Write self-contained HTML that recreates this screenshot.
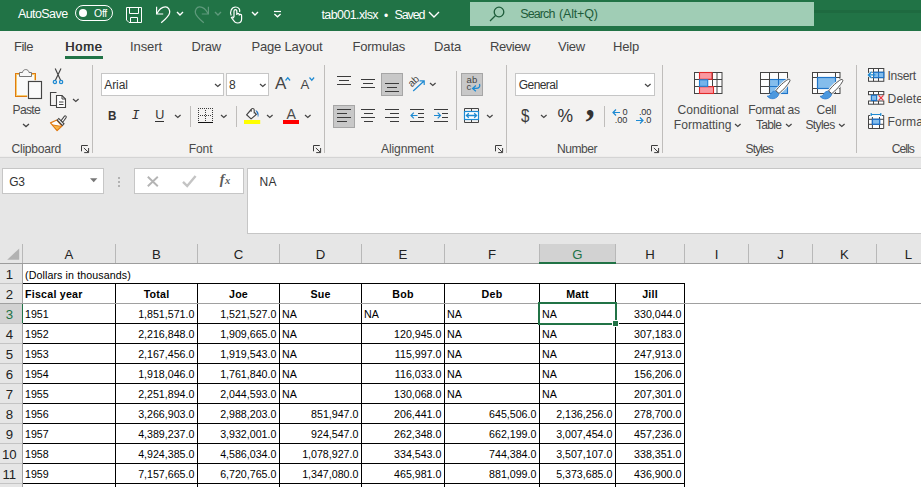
<!DOCTYPE html>
<html><head><meta charset="utf-8"><title>tab001.xlsx - Excel</title>
<style>
html,body{margin:0;padding:0;}
body{width:921px;height:487px;overflow:hidden;position:relative;background:#fff;font-family:"Liberation Sans",sans-serif;}
.t{position:absolute;white-space:pre;}
.r{position:absolute;}
svg{overflow:visible;}
</style></head><body>
<div class="r" style="left:0px;top:0px;width:921px;height:31px;background:#217346;"></div>
<div class="r" style="left:814px;top:10px;width:107px;height:3px;background:#1e6a40;"></div>
<div class="r" style="left:0px;top:31px;width:921px;height:126px;background:#f3f2f1;"></div>
<div class="r" style="left:0px;top:157px;width:921px;height:1px;background:#f8f8f8;"></div>
<div class="r" style="left:0px;top:158px;width:921px;height:106px;background:#e6e6e6;"></div>
<div class="t" style="left:18.00px;top:8.00px;font-size:12.5px;line-height:12.5px;color:#fff;letter-spacing:-0.588px;">AutoSave</div>
<div class="r" style="left:75px;top:5px;width:36px;height:14px;border:1px solid #fff;border-radius:8px;"></div>
<div class="r" style="left:79px;top:9px;width:8px;height:8px;border-radius:4px;background:#fff;"></div>
<div class="t" style="left:94.00px;top:8.00px;font-size:10.5px;line-height:10.5px;color:#fff;letter-spacing:-0.270px;">Off</div>
<svg class="r" style="left:126px;top:7px" width="16" height="16" viewBox="0 0 16 16"><path d="M0.5 0.5 H15.5 V15.5 H3 L0.5 13 Z M3.5 0.5 V6.5 H12.5 V0.5 M4.5 15.5 V10.5 H11.5 V15.5" fill="none" stroke="#fff" stroke-width="1"/></svg>
<svg class="r" style="left:156px;top:6px" width="15" height="18" viewBox="0 0 15 18"><path d="M0.6 0.8 V8 H7.2" fill="none" stroke="#fff" stroke-width="1.2"/><path d="M0.8 7.8 C3 3.5 6.5 0.8 9.5 0.9 C12.5 1 14 4 13.6 6.8 C13.2 9.5 9 13.5 5.2 16.8" fill="none" stroke="#fff" stroke-width="1.2"/></svg>
<svg class="r" style="left:175.6px;top:11.1px" width="8" height="5" viewBox="0 0 8 5"><path d="M1 1 L4.0 4 L7 1" fill="none" stroke="#fff" stroke-width="1.4"/></svg>
<svg class="r" style="left:194px;top:6px" width="15" height="18" viewBox="0 0 15 18"><path d="M14.4 0.8 V8 H7.8" fill="none" stroke="#5f9a7c" stroke-width="1.2"/><path d="M14.2 7.8 C12 3.5 8.5 0.8 5.5 0.9 C2.5 1 1 4 1.4 6.8 C1.8 9.5 6 13.5 9.8 16.8" fill="none" stroke="#5f9a7c" stroke-width="1.2"/></svg>
<svg class="r" style="left:214.4px;top:11.1px" width="8" height="5" viewBox="0 0 8 5"><path d="M1 1 L4.0 4 L7 1" fill="none" stroke="#5f9a7c" stroke-width="1.4"/></svg>
<svg class="r" style="left:230px;top:6px" width="13" height="18" viewBox="0 0 13 18">
<path d="M1.2 9.5 C-0.5 6 1.5 1 5.5 1 C8.8 1 10.3 3.5 9.6 6" fill="none" stroke="#fff" stroke-width="1.2"/>
<path d="M4 11 V5 a1.4 1.4 0 0 1 2.8 0 V9 M6.8 8.6 a1.2 1.2 0 0 1 2.4 0 V9.6 M9.2 9.4 a1.2 1.2 0 0 1 2.4 0.2 V13 c0 2.6 -1.6 4 -4 4 c-2.2 0 -3.2 -1 -4.6 -3.3 L1.4 11.6 c0.8 -0.9 1.8 -0.5 2.6 0.6" fill="none" stroke="#fff" stroke-width="1.2"/>
</svg>
<svg class="r" style="left:250.6px;top:11.1px" width="8" height="5" viewBox="0 0 8 5"><path d="M1 1 L4.0 4 L7 1" fill="none" stroke="#fff" stroke-width="1.4"/></svg>
<svg class="r" style="left:273px;top:10px" width="9" height="8" viewBox="0 0 9 8"><path d="M1 1.5 H8" stroke="#fff" stroke-width="1.2"/><path d="M1.4 4 L4.5 6.8 L7.6 4" fill="none" stroke="#fff" stroke-width="1.3"/></svg>
<div class="t" style="left:321.50px;top:9.00px;font-size:12.5px;line-height:12.5px;color:#fff;letter-spacing:-0.612px;">tab001.xlsx</div>
<div class="t" style="left:384.00px;top:10.00px;font-size:12px;line-height:12px;color:#fff;letter-spacing:0.000px;">•</div>
<div class="t" style="left:394.50px;top:9.00px;font-size:12.5px;line-height:12.5px;color:#fff;letter-spacing:-1.108px;">Saved</div>
<svg class="r" style="left:428.3px;top:10.7px" width="12" height="7" viewBox="0 0 12 7"><path d="M1 1 L6.0 6 L11 1" fill="none" stroke="#fff" stroke-width="1.4"/></svg>
<div class="r" style="left:470px;top:2px;width:344px;height:24px;background:#a0cdb5;"></div>
<svg class="r" style="left:489px;top:6px" width="16" height="16" viewBox="0 0 16 16"><circle cx="10" cy="6" r="4.8" fill="none" stroke="#1e5c3a" stroke-width="1.3"/><path d="M6.5 9.5 L1 15" stroke="#1e5c3a" stroke-width="1.3"/></svg>
<div class="t" style="left:520.20px;top:8.00px;font-size:12.5px;line-height:12.5px;color:#1e5c3a;letter-spacing:-0.884px;">Search</div>
<div class="t" style="left:559.00px;top:8.00px;font-size:12.5px;line-height:12.5px;color:#1e5c3a;letter-spacing:-0.162px;">(Alt+Q)</div>
<div class="t" style="left:14.00px;top:40.00px;font-size:13px;line-height:13px;color:#444;letter-spacing:-0.487px;">File</div>
<div class="t" style="left:65.00px;top:40.00px;font-size:13px;line-height:13px;color:#333;letter-spacing:0.706px;text-shadow:0.4px 0 0 #333;">Home</div>
<div class="t" style="left:130.00px;top:40.00px;font-size:13px;line-height:13px;color:#444;letter-spacing:-0.085px;">Insert</div>
<div class="t" style="left:191.50px;top:40.00px;font-size:13px;line-height:13px;color:#444;letter-spacing:-0.209px;">Draw</div>
<div class="t" style="left:251.50px;top:40.00px;font-size:13px;line-height:13px;color:#444;letter-spacing:-0.182px;">Page Layout</div>
<div class="t" style="left:352.50px;top:40.00px;font-size:13px;line-height:13px;color:#444;letter-spacing:-0.209px;">Formulas</div>
<div class="t" style="left:434.00px;top:40.00px;font-size:13px;line-height:13px;color:#444;letter-spacing:-0.115px;">Data</div>
<div class="t" style="left:490.00px;top:40.00px;font-size:13px;line-height:13px;color:#444;letter-spacing:-0.437px;">Review</div>
<div class="t" style="left:558.00px;top:40.00px;font-size:13px;line-height:13px;color:#444;letter-spacing:-0.235px;">View</div>
<div class="t" style="left:613.00px;top:40.00px;font-size:13px;line-height:13px;color:#444;letter-spacing:-0.184px;">Help</div>
<div class="r" style="left:65px;top:56px;width:38px;height:3px;background:#217346;"></div>
<svg class="r" style="left:14px;top:68px" width="29" height="32" viewBox="0 0 29 32">
<rect x="1.5" y="5.5" width="20" height="23" fill="#fafafa" stroke="#e07c10" stroke-width="1"/>
<rect x="2.5" y="6.5" width="18" height="21" fill="none" stroke="#f6cc70" stroke-width="1"/>
<path d="M5.5 8.5 V4.5 H8.5 C8.9 0.6 14.6 0.6 15 4.5 H17.5 V8.5 Z" fill="#f8f8f8" stroke="#777" stroke-width="1"/>
<rect x="13.2" y="12.2" width="15.6" height="19" fill="#f3f2f1"/>
<rect x="14.5" y="13.5" width="13" height="17" fill="#fafafa" stroke="#444" stroke-width="1.15"/>
</svg>
<div class="t" style="left:12.50px;top:104.00px;font-size:12.1px;line-height:12.1px;color:#4a4a4a;letter-spacing:-0.688px;">Paste</div>
<svg class="r" style="left:21.5px;top:123.2px" width="8" height="4.6" viewBox="0 0 8 4.6"><path d="M1 1 L4.0 3.6 L7 1" fill="none" stroke="#444" stroke-width="1.25"/></svg>
<svg class="r" style="left:52px;top:68px" width="12" height="17" viewBox="0 0 12 17">
<path d="M3.2 0.5 L8.6 12.2 M9 0.5 L3.4 12.2" stroke="#444" stroke-width="1.15" fill="none"/>
<circle cx="2.9" cy="14" r="1.6" fill="none" stroke="#1e8ad2" stroke-width="1.3"/>
<circle cx="9.1" cy="14" r="1.6" fill="none" stroke="#1e8ad2" stroke-width="1.3"/>
</svg>
<svg class="r" style="left:49px;top:92px" width="18" height="16" viewBox="0 0 18 16">
<path d="M7 13.5 H1.5 V0.5 H7.5" fill="none" stroke="#444" stroke-width="1.1"/>
<path d="M7.5 3.5 H13 L16.5 7 V15.5 H7.5 Z" fill="#fff" stroke="#444" stroke-width="1.1"/>
<path d="M13 3.5 V7 H16.5" fill="none" stroke="#444" stroke-width="1"/>
<path d="M10 10 H14.5 M10 12.5 H14.5" stroke="#444" stroke-width="1"/>
</svg>
<svg class="r" style="left:71.7px;top:98.3px" width="7.6" height="4.4" viewBox="0 0 7.6 4.4"><path d="M1 1 L3.8 3.4 L6.6 1" fill="none" stroke="#444" stroke-width="1.25"/></svg>
<svg class="r" style="left:46px;top:112px" width="26" height="22" viewBox="0 0 26 22">
<path d="M10.8 8 L4.5 10.9 L11.1 18.5 L16 14 Z" fill="#fdfdfd" stroke="#e27a12" stroke-width="1.2" stroke-linejoin="round"/>
<path d="M6.2 12.9 L15.3 14.4 L11.1 18.3 Z" fill="#f7b548" stroke="#e27a12" stroke-width="1"/>
<path d="M16.4 8.8 L19.2 5" stroke="#444" stroke-width="3.2" stroke-linecap="round"/>
<path d="M16.4 8.8 L19.2 5" stroke="#fff" stroke-width="1.2" stroke-linecap="round"/>
<path d="M11.6 7 L17.6 13" stroke="#444" stroke-width="3.2" stroke-linecap="butt"/>
<path d="M12.3 7.7 L16.9 12.3" stroke="#fff" stroke-width="1.1"/>
</svg>
<div class="t" style="left:11.50px;top:143.00px;font-size:12.1px;line-height:12.1px;color:#4a4a4a;letter-spacing:-0.254px;">Clipboard</div>
<svg class="r" style="left:81px;top:145px" width="8" height="8" viewBox="0 0 8 8"><path d="M0.5 6.3 V0.5 H6.8 M2.8 2.9 L7.3 7.2 M7.6 3 V7.6 H3.2" fill="none" stroke="#3c3c3c" stroke-width="1"/></svg>
<div class="r" style="left:92px;top:65px;width:1px;height:88px;background:#bfbdbb;"></div>
<div class="r" style="left:101px;top:73px;width:121px;height:21px;background:#fff;border:1px solid #c6c6c6;"></div>
<div class="t" style="left:104.30px;top:79.00px;font-size:12px;line-height:12px;color:#333;letter-spacing:-0.101px;">Arial</div>
<svg class="r" style="left:213.7px;top:83.3px" width="7.6" height="4.4" viewBox="0 0 7.6 4.4"><path d="M1 1 L3.8 3.4 L6.6 1" fill="none" stroke="#444" stroke-width="1.25"/></svg>
<div class="r" style="left:226px;top:73px;width:41px;height:21px;background:#fff;border:1px solid #c6c6c6;"></div>
<div class="t" style="left:229.00px;top:79.00px;font-size:12px;line-height:12px;color:#333;letter-spacing:-0.473px;">8</div>
<svg class="r" style="left:258.7px;top:83.3px" width="7.6" height="4.4" viewBox="0 0 7.6 4.4"><path d="M1 1 L3.8 3.4 L6.6 1" fill="none" stroke="#444" stroke-width="1.25"/></svg>
<div class="t" style="left:275.00px;top:75.00px;font-size:17px;line-height:17px;color:#444;letter-spacing:0.160px;">A</div>
<svg class="r" style="left:285px;top:77px" width="6" height="4" viewBox="0 0 6 4"><path d="M0.5 3.5 L2.8 0.8 L5.1 3.5" fill="none" stroke="#1e8ad2" stroke-width="1.2"/></svg>
<div class="t" style="left:300.50px;top:78.00px;font-size:13.2px;line-height:13.2px;color:#444;letter-spacing:0.295px;">A</div>
<svg class="r" style="left:309px;top:77px" width="6" height="4" viewBox="0 0 6 4"><path d="M0.5 0.5 L2.8 3.2 L5.1 0.5" fill="none" stroke="#1e8ad2" stroke-width="1.2"/></svg>
<div class="t" style="left:108.30px;top:109.00px;font-size:13px;line-height:13px;color:#333;letter-spacing:0.000px;font-weight:bold;transform:scaleX(0.9);transform-origin:0 0;">B</div>
<div class="t" style="left:131.60px;top:109.00px;font-size:13.6px;line-height:13.6px;color:#333;letter-spacing:0.000px;font-style:italic;font-family:'Liberation Mono',monospace;">I</div>
<div class="t" style="left:155.20px;top:109.00px;font-size:12.6px;line-height:12.6px;color:#333;letter-spacing:-0.600px;">U</div>
<div class="r" style="left:155px;top:121px;width:9px;height:1px;background:#333;"></div>
<svg class="r" style="left:173.7px;top:114.3px" width="7.6" height="4.4" viewBox="0 0 7.6 4.4"><path d="M1 1 L3.8 3.4 L6.6 1" fill="none" stroke="#444" stroke-width="1.25"/></svg>
<div class="r" style="left:190px;top:106px;width:1px;height:21px;background:#bfbdbb;"></div>
<svg class="r" style="left:198px;top:108px" width="15" height="15" viewBox="0 0 15 15"><g fill="#3a3a3a" shape-rendering="crispEdges"><rect x="0" y="0" width="1" height="1"/><rect x="2" y="0" width="1" height="1"/><rect x="4" y="0" width="1" height="1"/><rect x="6" y="0" width="1" height="1"/><rect x="8" y="0" width="1" height="1"/><rect x="10" y="0" width="1" height="1"/><rect x="12" y="0" width="1" height="1"/><rect x="14" y="0" width="1" height="1"/><rect x="0" y="2" width="1" height="1"/><rect x="14" y="2" width="1" height="1"/><rect x="0" y="4" width="1" height="1"/><rect x="14" y="4" width="1" height="1"/><rect x="0" y="6" width="1" height="1"/><rect x="14" y="6" width="1" height="1"/><rect x="0" y="8" width="1" height="1"/><rect x="14" y="8" width="1" height="1"/><rect x="0" y="10" width="1" height="1"/><rect x="14" y="10" width="1" height="1"/><rect x="0" y="12" width="1" height="1"/><rect x="14" y="12" width="1" height="1"/><rect x="7" y="2" width="1" height="1"/><rect x="7" y="4" width="1" height="1"/><rect x="7" y="10" width="1" height="1"/><rect x="7" y="12" width="1" height="1"/><rect x="2" y="7" width="1" height="1"/><rect x="4" y="7" width="1" height="1"/><rect x="10" y="7" width="1" height="1"/><rect x="12" y="7" width="1" height="1"/><rect x="7" y="6" width="1" height="1"/><rect x="7" y="8" width="1" height="1"/><rect x="6" y="7" width="1" height="1"/><rect x="8" y="7" width="1" height="1"/><rect x="0" y="13.6" width="15" height="1.4" fill="#111"/></g></svg>
<svg class="r" style="left:219.7px;top:114.3px" width="7.6" height="4.4" viewBox="0 0 7.6 4.4"><path d="M1 1 L3.8 3.4 L6.6 1" fill="none" stroke="#444" stroke-width="1.25"/></svg>
<div class="r" style="left:236px;top:106px;width:1px;height:21px;background:#bfbdbb;"></div>
<svg class="r" style="left:244px;top:108px" width="17" height="16" viewBox="0 0 17 16">
<path d="M7.2 1.5 L2.6 6.8 L7.1 10.9 L12.4 6.3 L10.3 4.2" fill="#fafafa" stroke="#444" stroke-width="1.15" stroke-linejoin="round"/>
<path d="M7.2 3.8 V1.9 a1.5 1.5 0 0 1 3 0 V5.6" fill="none" stroke="#444" stroke-width="1.05"/>
<path d="M11.4 2.2 C14.6 2.8 15.4 6.8 13.9 9.4 C13.9 7 13.2 4.8 11.4 2.2 Z" fill="#1e6fc0"/>
<rect x="0" y="12" width="16.2" height="4" fill="#ffff00"/>
</svg>
<svg class="r" style="left:265.5px;top:114.3px" width="7.6" height="4.4" viewBox="0 0 7.6 4.4"><path d="M1 1 L3.8 3.4 L6.6 1" fill="none" stroke="#444" stroke-width="1.25"/></svg>
<div class="t" style="left:286.50px;top:107.00px;font-size:14.2px;line-height:14.2px;color:#4a4a4a;letter-spacing:0.228px;">A</div>
<div class="r" style="left:283px;top:120px;width:16px;height:4px;background:#ff0000;"></div>
<svg class="r" style="left:304.4px;top:114.3px" width="7.6" height="4.4" viewBox="0 0 7.6 4.4"><path d="M1 1 L3.8 3.4 L6.6 1" fill="none" stroke="#444" stroke-width="1.25"/></svg>
<div class="t" style="left:188.70px;top:143.00px;font-size:12.1px;line-height:12.1px;color:#4a4a4a;letter-spacing:-0.102px;">Font</div>
<svg class="r" style="left:313px;top:145px" width="8" height="8" viewBox="0 0 8 8"><path d="M0.5 6.3 V0.5 H6.8 M2.8 2.9 L7.3 7.2 M7.6 3 V7.6 H3.2" fill="none" stroke="#3c3c3c" stroke-width="1"/></svg>
<div class="r" style="left:324px;top:65px;width:1px;height:88px;background:#bfbdbb;"></div>
<div class="r" style="left:337px;top:76px;width:14px;height:1px;background:#3b3b3b;"></div>
<div class="r" style="left:339px;top:80px;width:10px;height:1px;background:#3b3b3b;"></div>
<div class="r" style="left:337px;top:84px;width:14px;height:1px;background:#3b3b3b;"></div>
<div class="r" style="left:361px;top:79px;width:14px;height:1px;background:#3b3b3b;"></div>
<div class="r" style="left:363px;top:83px;width:10px;height:1px;background:#3b3b3b;"></div>
<div class="r" style="left:361px;top:87px;width:14px;height:1px;background:#3b3b3b;"></div>
<div class="r" style="left:381px;top:73px;width:20px;height:21px;background:#c8c8c8;border:1px solid #a6a6a6;"></div>
<div class="r" style="left:385px;top:83px;width:14px;height:1px;background:#3b3b3b;"></div>
<div class="r" style="left:387px;top:87px;width:10px;height:1px;background:#3b3b3b;"></div>
<div class="r" style="left:385px;top:91px;width:14px;height:1px;background:#3b3b3b;"></div>
<div class="t" style="left:412.6px;top:78px;font-size:10.3px;line-height:11px;color:#444;transform:rotate(-43deg);transform-origin:0 100%;letter-spacing:0px;">ab</div>
<svg class="r" style="left:408px;top:75px" width="18" height="17" viewBox="0 0 18 17"><path d="M5.2 16 L15.8 6.2 M11.6 5.8 H16.2 V10" fill="none" stroke="#1e8ad2" stroke-width="1.2"/></svg>
<svg class="r" style="left:428.59999999999997px;top:82.3px" width="7.6" height="4.4" viewBox="0 0 7.6 4.4"><path d="M1 1 L3.8 3.4 L6.6 1" fill="none" stroke="#444" stroke-width="1.25"/></svg>
<div class="r" style="left:333px;top:105px;width:20px;height:21px;background:#c8c8c8;border:1px solid #a6a6a6;"></div>
<div class="r" style="left:337px;top:109px;width:14px;height:1px;background:#3b3b3b;"></div>
<div class="r" style="left:337px;top:113px;width:9.5px;height:1px;background:#3b3b3b;"></div>
<div class="r" style="left:337px;top:117px;width:14px;height:1px;background:#3b3b3b;"></div>
<div class="r" style="left:337px;top:121px;width:9.5px;height:1px;background:#3b3b3b;"></div>
<div class="r" style="left:361px;top:109px;width:14px;height:1px;background:#3b3b3b;"></div>
<div class="r" style="left:363.5px;top:113px;width:9.0px;height:1px;background:#3b3b3b;"></div>
<div class="r" style="left:361px;top:117px;width:14px;height:1px;background:#3b3b3b;"></div>
<div class="r" style="left:363.5px;top:121px;width:9.0px;height:1px;background:#3b3b3b;"></div>
<div class="r" style="left:385px;top:109px;width:14px;height:1px;background:#3b3b3b;"></div>
<div class="r" style="left:389.5px;top:113px;width:9.5px;height:1px;background:#3b3b3b;"></div>
<div class="r" style="left:385px;top:117px;width:14px;height:1px;background:#3b3b3b;"></div>
<div class="r" style="left:389.5px;top:121px;width:9.5px;height:1px;background:#3b3b3b;"></div>
<div class="r" style="left:410px;top:109px;width:14px;height:1px;background:#3b3b3b;"></div>
<div class="r" style="left:418px;top:113px;width:6px;height:1px;background:#3b3b3b;"></div>
<div class="r" style="left:418px;top:117px;width:6px;height:1px;background:#3b3b3b;"></div>
<div class="r" style="left:410px;top:121px;width:14px;height:1px;background:#3b3b3b;"></div>
<svg class="r" style="left:410px;top:112px" width="8" height="7" viewBox="0 0 8 7"><path d="M7.5 3.5 H1 M3.8 0.6 L1 3.5 L3.8 6.4" fill="none" stroke="#1e8ad2" stroke-width="1.2"/></svg>
<div class="r" style="left:434px;top:109px;width:14px;height:1px;background:#3b3b3b;"></div>
<div class="r" style="left:442px;top:113px;width:6px;height:1px;background:#3b3b3b;"></div>
<div class="r" style="left:442px;top:117px;width:6px;height:1px;background:#3b3b3b;"></div>
<div class="r" style="left:434px;top:121px;width:14px;height:1px;background:#3b3b3b;"></div>
<svg class="r" style="left:434px;top:112px" width="8" height="7" viewBox="0 0 8 7"><path d="M0 3.5 H6.5 M3.7 0.6 L6.5 3.5 L3.7 6.4" fill="none" stroke="#1e8ad2" stroke-width="1.2"/></svg>
<div class="r" style="left:456px;top:71px;width:1px;height:59px;background:#bfbdbb;"></div>
<div class="r" style="left:461px;top:73px;width:20px;height:21px;background:#c8c8c8;border:1px solid #a6a6a6;"></div>
<div class="t" style="left:466.50px;top:75.00px;font-size:9.5px;line-height:9.5px;color:#444;letter-spacing:0.317px;">ab</div>
<div class="t" style="left:466.50px;top:82.00px;font-size:9.5px;line-height:9.5px;color:#444;letter-spacing:-0.250px;">c</div>
<svg class="r" style="left:471px;top:81px" width="10" height="12" viewBox="0 0 10 12"><path d="M1.6 7.4 H5 C8.2 7.4 9.3 5.4 8.5 3 M4.9 4.6 L1.6 7.4 L4.9 10.2" fill="none" stroke="#1e8ad2" stroke-width="1.25"/></svg>
<svg class="r" style="left:464px;top:108px" width="15" height="15" viewBox="0 0 15 15">
<path d="M0.5 0.5 H14.5 V14.5 H0.5 Z M7.5 0.5 V3.5 M7.5 11.5 V14.5" fill="none" stroke="#444" stroke-width="1"/>
<rect x="0.5" y="3.5" width="14" height="8" fill="#fff" stroke="#1e8ad2" stroke-width="1.2"/>
<path d="M2.6 7.5 H12.4 M4.8 5.2 L2.4 7.5 L4.8 9.8 M10.2 5.2 L12.6 7.5 L10.2 9.8" fill="none" stroke="#1e8ad2" stroke-width="1.3"/>
</svg>
<svg class="r" style="left:485.59999999999997px;top:114.3px" width="7.6" height="4.4" viewBox="0 0 7.6 4.4"><path d="M1 1 L3.8 3.4 L6.6 1" fill="none" stroke="#444" stroke-width="1.25"/></svg>
<div class="t" style="left:381.00px;top:143.00px;font-size:12.1px;line-height:12.1px;color:#4a4a4a;letter-spacing:-0.123px;">Alignment</div>
<svg class="r" style="left:495px;top:145px" width="8" height="8" viewBox="0 0 8 8"><path d="M0.5 6.3 V0.5 H6.8 M2.8 2.9 L7.3 7.2 M7.6 3 V7.6 H3.2" fill="none" stroke="#3c3c3c" stroke-width="1"/></svg>
<div class="r" style="left:506px;top:65px;width:1px;height:88px;background:#bfbdbb;"></div>
<div class="r" style="left:515px;top:73px;width:138px;height:21px;background:#fff;border:1px solid #c6c6c6;"></div>
<div class="t" style="left:518.80px;top:79.00px;font-size:12px;line-height:12px;color:#333;letter-spacing:-0.570px;">General</div>
<svg class="r" style="left:644.4000000000001px;top:83.3px" width="7.6" height="4.4" viewBox="0 0 7.6 4.4"><path d="M1 1 L3.8 3.4 L6.6 1" fill="none" stroke="#444" stroke-width="1.25"/></svg>
<div class="t" style="left:521.40px;top:108.00px;font-size:17.5px;line-height:17.5px;color:#3a3a3a;letter-spacing:0.000px;transform:scaleX(0.86);transform-origin:0 0;">$</div>
<svg class="r" style="left:539.6px;top:114.3px" width="7.6" height="4.4" viewBox="0 0 7.6 4.4"><path d="M1 1 L3.8 3.4 L6.6 1" fill="none" stroke="#444" stroke-width="1.25"/></svg>
<div class="t" style="left:557.50px;top:108.00px;font-size:17.5px;line-height:17.5px;color:#333;letter-spacing:-0.761px;">%</div>
<div class="t" style="left:585.40px;top:85.00px;font-size:37px;line-height:37px;color:#333;letter-spacing:0.000px;font-weight:bold;font-family:'Liberation Serif',serif;">,</div>
<div class="r" style="left:604px;top:106px;width:1px;height:21px;background:#bfbdbb;"></div>
<svg class="r" style="left:612px;top:109px" width="9" height="7" viewBox="0 0 9 7"><path d="M8 3.5 H1 M4 0.5 L1 3.5 L4 6.5" fill="none" stroke="#1e8ad2" stroke-width="1.2"/></svg>
<div class="t" style="left:622.50px;top:108.00px;font-size:9.2px;line-height:9.2px;color:#333;letter-spacing:-0.416px;">0</div>
<div class="t" style="left:614.80px;top:116.00px;font-size:9.2px;line-height:9.2px;color:#333;letter-spacing:-0.129px;">.00</div>
<div class="t" style="left:639.00px;top:108.00px;font-size:9.2px;line-height:9.2px;color:#333;letter-spacing:-0.196px;">.00</div>
<svg class="r" style="left:636px;top:117px" width="9" height="7" viewBox="0 0 9 7"><path d="M0 3.5 H7 M4 0.5 L7 3.5 L4 6.5" fill="none" stroke="#1e8ad2" stroke-width="1.2"/></svg>
<div class="t" style="left:643.80px;top:116.00px;font-size:9.2px;line-height:9.2px;color:#333;letter-spacing:-0.136px;">.0</div>
<div class="t" style="left:557.00px;top:143.00px;font-size:12.1px;line-height:12.1px;color:#4a4a4a;letter-spacing:-0.505px;">Number</div>
<svg class="r" style="left:651px;top:145px" width="8" height="8" viewBox="0 0 8 8"><path d="M0.5 6.3 V0.5 H6.8 M2.8 2.9 L7.3 7.2 M7.6 3 V7.6 H3.2" fill="none" stroke="#3c3c3c" stroke-width="1"/></svg>
<div class="r" style="left:662px;top:65px;width:1px;height:88px;background:#bfbdbb;"></div>
<svg class="r" style="left:694px;top:72px" width="29" height="23" viewBox="0 0 29 23">
<rect x="0.5" y="0.5" width="27.5" height="21" fill="#fdfdfd" stroke="#444" stroke-width="1"/>
<path d="M5.5 0.5 V21.5 M18.5 0.5 V21.5 M23 0.5 V21.5 M0.5 7.5 H28 M0.5 14.5 H28" stroke="#444" stroke-width="1" fill="none"/>
<rect x="5.5" y="0.5" width="12.5" height="6.8" fill="#fa98a0" stroke="#e02a2a" stroke-width="1.1"/>
<rect x="5.5" y="14.7" width="14" height="6.8" fill="#fa98a0" stroke="#e02a2a" stroke-width="1.1"/>
<rect x="5.5" y="7.8" width="8.2" height="6.5" fill="#74b4ea" stroke="#1e7fd4" stroke-width="1.1"/>
</svg>
<div class="t" style="left:677.40px;top:104.00px;font-size:12.1px;line-height:12.1px;color:#4a4a4a;letter-spacing:0.087px;">Conditional</div>
<div class="t" style="left:673.80px;top:119.00px;font-size:12.1px;line-height:12.1px;color:#4a4a4a;letter-spacing:-0.012px;">Formatting</div>
<svg class="r" style="left:734.4000000000001px;top:123.3px" width="7.6" height="4.4" viewBox="0 0 7.6 4.4"><path d="M1 1 L3.8 3.4 L6.6 1" fill="none" stroke="#444" stroke-width="1.25"/></svg>
<svg class="r" style="left:760px;top:72px" width="32" height="28" viewBox="0 0 32 28">
<rect x="0.5" y="0.5" width="27" height="21" fill="#fdfdfd" stroke="#444" stroke-width="1"/>
<rect x="9.5" y="7.5" width="18" height="14" fill="#84bdec" stroke="#1e74c8" stroke-width="1.1"/>
<path d="M9.5 0.5 V21.5 M18.5 0.5 V7.5 M0.5 7.5 H9.5 M0.5 14.5 H9.5" stroke="#444" stroke-width="1" fill="none"/>
<path d="M18.5 7.5 V21.5 M9.5 14.5 H27.5" stroke="#1e74c8" stroke-width="1.1" fill="none"/>
<path d="M15.8 18.8 C18.5 15 24.5 9.2 28.2 7.4 C29.6 6.8 30.4 7.8 29.9 9 C28 13 22.5 18.5 19 21.4 Z" fill="none" stroke="#f3f2f1" stroke-width="2.6"/>
<path d="M15.6 18.9 C13.8 18.9 12 19.8 11.2 21.4 C10.4 23 9.2 24.2 7.2 24.2 C8.8 26 11 26.9 13.2 26.7 C16 26.4 18.4 24.6 19 21.6 Z" fill="#4c98de" stroke="#2a7bd0" stroke-width="0.8"/>
<path d="M15.8 18.8 C18.5 15 24.5 9.2 28.2 7.4 C29.6 6.8 30.4 7.8 29.9 9 C28 13 22.5 18.5 19 21.4 Z" fill="#fff" stroke="#555" stroke-width="1"/>
</svg>
<div class="t" style="left:748.20px;top:104.00px;font-size:12.1px;line-height:12.1px;color:#4a4a4a;letter-spacing:-0.329px;">Format as</div>
<div class="t" style="left:756.10px;top:119.00px;font-size:12.1px;line-height:12.1px;color:#4a4a4a;letter-spacing:-0.765px;">Table</div>
<svg class="r" style="left:784.6px;top:123.3px" width="7.6" height="4.4" viewBox="0 0 7.6 4.4"><path d="M1 1 L3.8 3.4 L6.6 1" fill="none" stroke="#444" stroke-width="1.25"/></svg>
<svg class="r" style="left:812px;top:72px" width="32" height="28" viewBox="0 0 32 28">
<rect x="0.5" y="0.5" width="27.5" height="21" fill="#fdfdfd" stroke="#444" stroke-width="1"/>
<path d="M5.5 0.5 V21.5 M23.5 0.5 V21.5 M0.5 5.5 H28 M0.5 16.5 H28" stroke="#444" stroke-width="1" fill="none"/>
<rect x="5.5" y="5.5" width="18" height="11" fill="#84bdec" stroke="#1e74c8" stroke-width="1.2"/>
<g transform="translate(0.8,0.2)"><path d="M15.8 18.8 C18.5 15 24.5 9.2 28.2 7.4 C29.6 6.8 30.4 7.8 29.9 9 C28 13 22.5 18.5 19 21.4 Z" fill="none" stroke="#f3f2f1" stroke-width="2.6"/>
<path d="M15.6 18.9 C13.8 18.9 12 19.8 11.2 21.4 C10.4 23 9.2 24.2 7.2 24.2 C8.8 26 11 26.9 13.2 26.7 C16 26.4 18.4 24.6 19 21.6 Z" fill="#4c98de" stroke="#2a7bd0" stroke-width="0.8"/>
<path d="M15.8 18.8 C18.5 15 24.5 9.2 28.2 7.4 C29.6 6.8 30.4 7.8 29.9 9 C28 13 22.5 18.5 19 21.4 Z" fill="#fff" stroke="#555" stroke-width="1"/></g>
</svg>
<div class="t" style="left:816.50px;top:104.00px;font-size:12.1px;line-height:12.1px;color:#4a4a4a;letter-spacing:-0.336px;">Cell</div>
<div class="t" style="left:805.40px;top:119.00px;font-size:12.1px;line-height:12.1px;color:#4a4a4a;letter-spacing:-0.608px;">Styles</div>
<svg class="r" style="left:837.8000000000001px;top:123.3px" width="7.6" height="4.4" viewBox="0 0 7.6 4.4"><path d="M1 1 L3.8 3.4 L6.6 1" fill="none" stroke="#444" stroke-width="1.25"/></svg>
<div class="t" style="left:745.60px;top:143.00px;font-size:12.1px;line-height:12.1px;color:#4a4a4a;letter-spacing:-0.925px;">Styles</div>
<div class="r" style="left:856px;top:65px;width:1px;height:88px;background:#bfbdbb;"></div>
<svg class="r" style="left:868px;top:68px" width="17" height="14" viewBox="0 0 17 14">
<rect x="0.5" y="0.5" width="15.3" height="12.8" fill="#fdfdfd" stroke="#444" stroke-width="1"/>
<path d="M5.5 0.5 V13.3 M10.5 0.5 V13.3 M0.5 4.3 H15.8 M0.5 9.6 H15.8" fill="none" stroke="#444" stroke-width="1"/>
<rect x="5.6" y="4.3" width="10.2" height="5.3" fill="#84bdec" stroke="#1e74c8" stroke-width="1.2"/>
<path d="M10.6 4.3 V9.6" stroke="#1e74c8" stroke-width="1"/>
<path d="M5 6.9 H0.4 M3.6 3.8 L0.4 6.9 L3.6 10" fill="none" stroke="#fdfdfd" stroke-width="2.6"/><path d="M7.4 6.9 H0.4 M3.6 3.8 L0.4 6.9 L3.6 10" fill="none" stroke="#1e8ad2" stroke-width="1.4"/>
</svg>
<div class="t" style="left:887.60px;top:70.00px;font-size:12.1px;line-height:12.1px;color:#4a4a4a;letter-spacing:-0.360px;">Insert</div>
<svg class="r" style="left:868px;top:91px" width="17" height="14" viewBox="0 0 17 14">
<rect x="0.5" y="0.5" width="15.3" height="3.2" fill="#fdfdfd" stroke="#444" stroke-width="1"/>
<rect x="0.5" y="10" width="15.3" height="3.2" fill="#fdfdfd" stroke="#444" stroke-width="1"/>
<path d="M5.5 0.5 V3.7 M10.5 0.5 V3.7 M5.5 10 V13.2 M10.5 10 V13.2" fill="none" stroke="#444" stroke-width="1"/>
<rect x="3.4" y="4.3" width="5.2" height="5.2" fill="#84bdec" stroke="#1e74c8" stroke-width="1.2"/>
<path d="M10.6 4.4 L15.4 9.4 M15.4 4.4 L10.6 9.4" stroke="#ee3a44" stroke-width="1.3"/>
</svg>
<div class="t" style="left:887.60px;top:93.00px;font-size:12.1px;line-height:12.1px;color:#4a4a4a;letter-spacing:0.071px;">Delete</div>
<svg class="r" style="left:868px;top:113px" width="17" height="16" viewBox="0 0 17 16">
<path d="M0.5 2.5 V15.5 H15.7 V2.5" fill="#fdfdfd" stroke="none"/>
<path d="M2.2 2.5 H0.5 V15.5 H15.7 V2.5 H14 M4.4 4 V15.5 M11.5 4 V15.5 M0.5 6.3 H15.7 M0.5 11.3 H15.7" fill="none" stroke="#444" stroke-width="1"/>
<rect x="4.4" y="6.3" width="7.3" height="5" fill="#84bdec" stroke="#1e70c8" stroke-width="1.3"/>
<path d="M3.2 1.5 H12.8 M3.2 0 V3 M12.8 0 V3" stroke="#1e8ad2" stroke-width="1.2" fill="none"/>
</svg>
<div class="t" style="left:887.60px;top:116.00px;font-size:12.1px;line-height:12.1px;color:#4a4a4a;letter-spacing:0.097px;">Format</div>
<div class="t" style="left:891.70px;top:143.00px;font-size:12.1px;line-height:12.1px;color:#4a4a4a;letter-spacing:-0.919px;">Cells</div>
<div class="r" style="left:0px;top:156px;width:921px;height:1px;background:#eeedec;"></div>
<div class="r" style="left:0px;top:157px;width:921px;height:1px;background:#d4d4d4;"></div>
<div class="r" style="left:2px;top:168px;width:100px;height:24px;background:#fff;border:1px solid #c6c6c6;"></div>
<div class="t" style="left:9.20px;top:176.00px;font-size:12px;line-height:12px;color:#333;letter-spacing:-0.253px;">G3</div>
<svg class="r" style="left:90px;top:178px" width="8" height="5" viewBox="0 0 8 5"><path d="M0 0.3 H7.4 L3.7 4.3 Z" fill="#777"/></svg>
<div class="r" style="left:118.3px;top:177px;width:1.6px;height:1.6px;background:#b2b2b2;"></div>
<div class="r" style="left:118.3px;top:181px;width:1.6px;height:1.6px;background:#b2b2b2;"></div>
<div class="r" style="left:118.3px;top:185px;width:1.6px;height:1.6px;background:#b2b2b2;"></div>
<div class="r" style="left:134px;top:168px;width:108px;height:24px;background:#fff;border:1px solid #c6c6c6;"></div>
<svg class="r" style="left:147px;top:176px" width="12" height="11" viewBox="0 0 12 11"><path d="M0.8 0.8 L10.8 10.2 M10.8 0.8 L0.8 10.2" stroke="#b4b4b4" stroke-width="1.9" fill="none"/></svg>
<svg class="r" style="left:182px;top:175px" width="15" height="12" viewBox="0 0 15 12"><path d="M1 6.8 L5.2 11 L13.6 1" stroke="#c4c4c4" stroke-width="2.4" fill="none"/></svg>
<div class="t" style="left:219.80px;top:172.00px;font-size:14.5px;line-height:14.5px;color:#5c5c5c;letter-spacing:0.000px;font-weight:bold;font-style:italic;font-family:'Liberation Serif',serif;">f</div>
<div class="t" style="left:225.00px;top:176.00px;font-size:10.5px;line-height:10.5px;color:#5c5c5c;letter-spacing:0.000px;font-weight:bold;font-style:italic;font-family:'Liberation Serif',serif;">x</div>
<div class="r" style="left:247px;top:168px;width:680px;height:64px;background:#fff;border:1px solid #c6c6c6;"></div>
<div class="t" style="left:259.40px;top:176.00px;font-size:12px;line-height:12px;color:#333;letter-spacing:0.465px;">NA</div>
<div class="r" style="left:0px;top:264px;width:921px;height:223px;background:#fff;"></div>
<div class="r" style="left:0px;top:244px;width:921px;height:19px;background:#e6e6e6;"></div>
<div class="r" style="left:540px;top:244px;width:75px;height:19px;background:#d2d2d2;"></div>
<div class="r" style="left:115px;top:244px;width:1px;height:19px;background:#b8b8b8;"></div>
<div class="t" style="left:64.60px;top:248.00px;font-size:13.2px;line-height:13.2px;color:#222;letter-spacing:0.000px;">A</div>
<div class="r" style="left:197px;top:244px;width:1px;height:19px;background:#b8b8b8;"></div>
<div class="t" style="left:152.10px;top:248.00px;font-size:13.2px;line-height:13.2px;color:#222;letter-spacing:0.000px;">B</div>
<div class="r" style="left:279px;top:244px;width:1px;height:19px;background:#b8b8b8;"></div>
<div class="t" style="left:233.73px;top:248.00px;font-size:13.2px;line-height:13.2px;color:#222;letter-spacing:0.000px;">C</div>
<div class="r" style="left:361px;top:244px;width:1px;height:19px;background:#b8b8b8;"></div>
<div class="t" style="left:315.73px;top:248.00px;font-size:13.2px;line-height:13.2px;color:#222;letter-spacing:0.000px;">D</div>
<div class="r" style="left:444px;top:244px;width:1px;height:19px;background:#b8b8b8;"></div>
<div class="t" style="left:398.60px;top:248.00px;font-size:13.2px;line-height:13.2px;color:#222;letter-spacing:0.000px;">E</div>
<div class="r" style="left:539px;top:244px;width:1px;height:19px;background:#b8b8b8;"></div>
<div class="t" style="left:487.97px;top:248.00px;font-size:13.2px;line-height:13.2px;color:#222;letter-spacing:0.000px;">F</div>
<div class="r" style="left:615px;top:244px;width:1px;height:19px;background:#b8b8b8;"></div>
<div class="t" style="left:572.37px;top:248.00px;font-size:13.2px;line-height:13.2px;color:#217346;letter-spacing:0.000px;">G</div>
<div class="r" style="left:684px;top:244px;width:1px;height:19px;background:#b8b8b8;"></div>
<div class="t" style="left:645.23px;top:248.00px;font-size:13.2px;line-height:13.2px;color:#222;letter-spacing:0.000px;">H</div>
<div class="r" style="left:748px;top:244px;width:1px;height:19px;background:#b8b8b8;"></div>
<div class="t" style="left:714.67px;top:248.00px;font-size:13.2px;line-height:13.2px;color:#222;letter-spacing:0.000px;">I</div>
<div class="r" style="left:812px;top:244px;width:1px;height:19px;background:#b8b8b8;"></div>
<div class="t" style="left:777.20px;top:248.00px;font-size:13.2px;line-height:13.2px;color:#222;letter-spacing:0.000px;">J</div>
<div class="r" style="left:876px;top:244px;width:1px;height:19px;background:#b8b8b8;"></div>
<div class="t" style="left:840.10px;top:248.00px;font-size:13.2px;line-height:13.2px;color:#222;letter-spacing:0.000px;">K</div>
<div class="t" style="left:904.83px;top:248.00px;font-size:13.2px;line-height:13.2px;color:#222;letter-spacing:0.000px;">L</div>
<div class="r" style="left:22px;top:244px;width:1px;height:19px;background:#b8b8b8;"></div>
<div class="r" style="left:0px;top:263px;width:921px;height:1px;background:#9c9c9c;"></div>
<div class="r" style="left:539px;top:262px;width:77px;height:2px;background:#217346;"></div>
<svg class="r" style="left:4px;top:248px" width="16" height="14" viewBox="0 0 16 14"><path d="M15.2 0.4 V11.8 H3.2 Z" fill="#b2b2b2"/></svg>
<div class="r" style="left:0px;top:264px;width:22px;height:223px;background:#e6e6e6;"></div>
<div class="r" style="left:22px;top:264px;width:1px;height:223px;background:#a0a0a0;"></div>
<div class="r" style="left:0px;top:304px;width:22px;height:19px;background:#d2d2d2;"></div>
<div class="r" style="left:0px;top:283px;width:22px;height:1px;background:#c4c4c4;"></div>
<div class="t" style="left:5.63px;top:268.00px;font-size:13.2px;line-height:13.2px;color:#222;letter-spacing:0.000px;">1</div>
<div class="r" style="left:0px;top:303px;width:22px;height:1px;background:#c4c4c4;"></div>
<div class="t" style="left:5.63px;top:288.00px;font-size:13.2px;line-height:13.2px;color:#222;letter-spacing:0.000px;">2</div>
<div class="r" style="left:0px;top:323px;width:22px;height:1px;background:#c4c4c4;"></div>
<div class="t" style="left:5.63px;top:308.00px;font-size:13.2px;line-height:13.2px;color:#217346;letter-spacing:0.000px;">3</div>
<div class="r" style="left:0px;top:343px;width:22px;height:1px;background:#c4c4c4;"></div>
<div class="t" style="left:5.63px;top:328.00px;font-size:13.2px;line-height:13.2px;color:#222;letter-spacing:0.000px;">4</div>
<div class="r" style="left:0px;top:363px;width:22px;height:1px;background:#c4c4c4;"></div>
<div class="t" style="left:5.63px;top:348.00px;font-size:13.2px;line-height:13.2px;color:#222;letter-spacing:0.000px;">5</div>
<div class="r" style="left:0px;top:383px;width:22px;height:1px;background:#c4c4c4;"></div>
<div class="t" style="left:5.63px;top:368.00px;font-size:13.2px;line-height:13.2px;color:#222;letter-spacing:0.000px;">6</div>
<div class="r" style="left:0px;top:403px;width:22px;height:1px;background:#c4c4c4;"></div>
<div class="t" style="left:5.63px;top:388.00px;font-size:13.2px;line-height:13.2px;color:#222;letter-spacing:0.000px;">7</div>
<div class="r" style="left:0px;top:423px;width:22px;height:1px;background:#c4c4c4;"></div>
<div class="t" style="left:5.63px;top:408.00px;font-size:13.2px;line-height:13.2px;color:#222;letter-spacing:0.000px;">8</div>
<div class="r" style="left:0px;top:443px;width:22px;height:1px;background:#c4c4c4;"></div>
<div class="t" style="left:5.63px;top:428.00px;font-size:13.2px;line-height:13.2px;color:#222;letter-spacing:0.000px;">9</div>
<div class="r" style="left:0px;top:463px;width:22px;height:1px;background:#c4c4c4;"></div>
<div class="t" style="left:1.96px;top:448.00px;font-size:13.2px;line-height:13.2px;color:#222;letter-spacing:0.000px;">10</div>
<div class="r" style="left:0px;top:483px;width:22px;height:1px;background:#c4c4c4;"></div>
<div class="t" style="left:2.45px;top:468.00px;font-size:13.2px;line-height:13.2px;color:#222;letter-spacing:0.000px;">11</div>
<div class="r" style="left:22px;top:304px;width:1px;height:19px;background:#217346;"></div>
<div class="t" style="left:25.00px;top:270.00px;font-size:10.67px;line-height:10.67px;color:#000;letter-spacing:0.101px;">(Dollars in thousands)</div>
<div class="t" style="left:25.00px;top:289.00px;font-size:10.67px;line-height:10.67px;color:#000;letter-spacing:0.231px;font-weight:bold;">Fiscal year</div>
<div class="t" style="left:143.65px;top:289.00px;font-size:10.67px;line-height:10.67px;color:#000;letter-spacing:0.200px;font-weight:bold;">Total</div>
<div class="t" style="left:229.01px;top:289.00px;font-size:10.67px;line-height:10.67px;color:#000;letter-spacing:0.200px;font-weight:bold;">Joe</div>
<div class="t" style="left:310.42px;top:289.00px;font-size:10.67px;line-height:10.67px;color:#000;letter-spacing:0.200px;font-weight:bold;">Sue</div>
<div class="t" style="left:392.33px;top:289.00px;font-size:10.67px;line-height:10.67px;color:#000;letter-spacing:0.200px;font-weight:bold;">Bob</div>
<div class="t" style="left:481.62px;top:289.00px;font-size:10.67px;line-height:10.67px;color:#000;letter-spacing:0.200px;font-weight:bold;">Deb</div>
<div class="t" style="left:566.14px;top:289.00px;font-size:10.67px;line-height:10.67px;color:#000;letter-spacing:0.200px;font-weight:bold;">Matt</div>
<div class="t" style="left:642.19px;top:289.00px;font-size:10.67px;line-height:10.67px;color:#000;letter-spacing:0.200px;font-weight:bold;">Jill</div>
<div class="t" style="left:25.00px;top:309.00px;font-size:10.67px;line-height:10.67px;color:#000;letter-spacing:0.000px;">1951</div>
<div class="t" style="left:138.14px;top:309.00px;font-size:10.67px;line-height:10.67px;color:#000;letter-spacing:0.000px;">1,851,571.0</div>
<div class="t" style="left:220.14px;top:309.00px;font-size:10.67px;line-height:10.67px;color:#000;letter-spacing:0.000px;">1,521,527.0</div>
<div class="t" style="left:282.00px;top:309.00px;font-size:10.67px;line-height:10.67px;color:#000;letter-spacing:0.000px;">NA</div>
<div class="t" style="left:364.00px;top:309.00px;font-size:10.67px;line-height:10.67px;color:#000;letter-spacing:0.000px;">NA</div>
<div class="t" style="left:447.00px;top:309.00px;font-size:10.67px;line-height:10.67px;color:#000;letter-spacing:0.000px;">NA</div>
<div class="t" style="left:542.00px;top:309.00px;font-size:10.67px;line-height:10.67px;color:#000;letter-spacing:0.000px;">NA</div>
<div class="t" style="left:634.04px;top:309.00px;font-size:10.67px;line-height:10.67px;color:#000;letter-spacing:0.000px;">330,044.0</div>
<div class="t" style="left:25.00px;top:329.00px;font-size:10.67px;line-height:10.67px;color:#000;letter-spacing:0.000px;">1952</div>
<div class="t" style="left:138.14px;top:329.00px;font-size:10.67px;line-height:10.67px;color:#000;letter-spacing:0.000px;">2,216,848.0</div>
<div class="t" style="left:220.14px;top:329.00px;font-size:10.67px;line-height:10.67px;color:#000;letter-spacing:0.000px;">1,909,665.0</div>
<div class="t" style="left:282.00px;top:329.00px;font-size:10.67px;line-height:10.67px;color:#000;letter-spacing:0.000px;">NA</div>
<div class="t" style="left:394.04px;top:329.00px;font-size:10.67px;line-height:10.67px;color:#000;letter-spacing:0.000px;">120,945.0</div>
<div class="t" style="left:447.00px;top:329.00px;font-size:10.67px;line-height:10.67px;color:#000;letter-spacing:0.000px;">NA</div>
<div class="t" style="left:542.00px;top:329.00px;font-size:10.67px;line-height:10.67px;color:#000;letter-spacing:0.000px;">NA</div>
<div class="t" style="left:634.04px;top:329.00px;font-size:10.67px;line-height:10.67px;color:#000;letter-spacing:0.000px;">307,183.0</div>
<div class="t" style="left:25.00px;top:349.00px;font-size:10.67px;line-height:10.67px;color:#000;letter-spacing:0.000px;">1953</div>
<div class="t" style="left:138.14px;top:349.00px;font-size:10.67px;line-height:10.67px;color:#000;letter-spacing:0.000px;">2,167,456.0</div>
<div class="t" style="left:220.14px;top:349.00px;font-size:10.67px;line-height:10.67px;color:#000;letter-spacing:0.000px;">1,919,543.0</div>
<div class="t" style="left:282.00px;top:349.00px;font-size:10.67px;line-height:10.67px;color:#000;letter-spacing:0.000px;">NA</div>
<div class="t" style="left:394.83px;top:349.00px;font-size:10.67px;line-height:10.67px;color:#000;letter-spacing:0.000px;">115,997.0</div>
<div class="t" style="left:447.00px;top:349.00px;font-size:10.67px;line-height:10.67px;color:#000;letter-spacing:0.000px;">NA</div>
<div class="t" style="left:542.00px;top:349.00px;font-size:10.67px;line-height:10.67px;color:#000;letter-spacing:0.000px;">NA</div>
<div class="t" style="left:634.04px;top:349.00px;font-size:10.67px;line-height:10.67px;color:#000;letter-spacing:0.000px;">247,913.0</div>
<div class="t" style="left:25.00px;top:369.00px;font-size:10.67px;line-height:10.67px;color:#000;letter-spacing:0.000px;">1954</div>
<div class="t" style="left:138.14px;top:369.00px;font-size:10.67px;line-height:10.67px;color:#000;letter-spacing:0.000px;">1,918,046.0</div>
<div class="t" style="left:220.14px;top:369.00px;font-size:10.67px;line-height:10.67px;color:#000;letter-spacing:0.000px;">1,761,840.0</div>
<div class="t" style="left:282.00px;top:369.00px;font-size:10.67px;line-height:10.67px;color:#000;letter-spacing:0.000px;">NA</div>
<div class="t" style="left:394.83px;top:369.00px;font-size:10.67px;line-height:10.67px;color:#000;letter-spacing:0.000px;">116,033.0</div>
<div class="t" style="left:447.00px;top:369.00px;font-size:10.67px;line-height:10.67px;color:#000;letter-spacing:0.000px;">NA</div>
<div class="t" style="left:542.00px;top:369.00px;font-size:10.67px;line-height:10.67px;color:#000;letter-spacing:0.000px;">NA</div>
<div class="t" style="left:634.04px;top:369.00px;font-size:10.67px;line-height:10.67px;color:#000;letter-spacing:0.000px;">156,206.0</div>
<div class="t" style="left:25.00px;top:389.00px;font-size:10.67px;line-height:10.67px;color:#000;letter-spacing:0.000px;">1955</div>
<div class="t" style="left:138.14px;top:389.00px;font-size:10.67px;line-height:10.67px;color:#000;letter-spacing:0.000px;">2,251,894.0</div>
<div class="t" style="left:220.14px;top:389.00px;font-size:10.67px;line-height:10.67px;color:#000;letter-spacing:0.000px;">2,044,593.0</div>
<div class="t" style="left:282.00px;top:389.00px;font-size:10.67px;line-height:10.67px;color:#000;letter-spacing:0.000px;">NA</div>
<div class="t" style="left:394.04px;top:389.00px;font-size:10.67px;line-height:10.67px;color:#000;letter-spacing:0.000px;">130,068.0</div>
<div class="t" style="left:447.00px;top:389.00px;font-size:10.67px;line-height:10.67px;color:#000;letter-spacing:0.000px;">NA</div>
<div class="t" style="left:542.00px;top:389.00px;font-size:10.67px;line-height:10.67px;color:#000;letter-spacing:0.000px;">NA</div>
<div class="t" style="left:634.04px;top:389.00px;font-size:10.67px;line-height:10.67px;color:#000;letter-spacing:0.000px;">207,301.0</div>
<div class="t" style="left:25.00px;top:409.00px;font-size:10.67px;line-height:10.67px;color:#000;letter-spacing:0.000px;">1956</div>
<div class="t" style="left:138.14px;top:409.00px;font-size:10.67px;line-height:10.67px;color:#000;letter-spacing:0.000px;">3,266,903.0</div>
<div class="t" style="left:220.14px;top:409.00px;font-size:10.67px;line-height:10.67px;color:#000;letter-spacing:0.000px;">2,988,203.0</div>
<div class="t" style="left:311.04px;top:409.00px;font-size:10.67px;line-height:10.67px;color:#000;letter-spacing:0.000px;">851,947.0</div>
<div class="t" style="left:394.04px;top:409.00px;font-size:10.67px;line-height:10.67px;color:#000;letter-spacing:0.000px;">206,441.0</div>
<div class="t" style="left:489.04px;top:409.00px;font-size:10.67px;line-height:10.67px;color:#000;letter-spacing:0.000px;">645,506.0</div>
<div class="t" style="left:556.14px;top:409.00px;font-size:10.67px;line-height:10.67px;color:#000;letter-spacing:0.000px;">2,136,256.0</div>
<div class="t" style="left:634.04px;top:409.00px;font-size:10.67px;line-height:10.67px;color:#000;letter-spacing:0.000px;">278,700.0</div>
<div class="t" style="left:25.00px;top:429.00px;font-size:10.67px;line-height:10.67px;color:#000;letter-spacing:0.000px;">1957</div>
<div class="t" style="left:138.14px;top:429.00px;font-size:10.67px;line-height:10.67px;color:#000;letter-spacing:0.000px;">4,389,237.0</div>
<div class="t" style="left:220.14px;top:429.00px;font-size:10.67px;line-height:10.67px;color:#000;letter-spacing:0.000px;">3,932,001.0</div>
<div class="t" style="left:311.04px;top:429.00px;font-size:10.67px;line-height:10.67px;color:#000;letter-spacing:0.000px;">924,547.0</div>
<div class="t" style="left:394.04px;top:429.00px;font-size:10.67px;line-height:10.67px;color:#000;letter-spacing:0.000px;">262,348.0</div>
<div class="t" style="left:489.04px;top:429.00px;font-size:10.67px;line-height:10.67px;color:#000;letter-spacing:0.000px;">662,199.0</div>
<div class="t" style="left:556.14px;top:429.00px;font-size:10.67px;line-height:10.67px;color:#000;letter-spacing:0.000px;">3,007,454.0</div>
<div class="t" style="left:634.04px;top:429.00px;font-size:10.67px;line-height:10.67px;color:#000;letter-spacing:0.000px;">457,236.0</div>
<div class="t" style="left:25.00px;top:449.00px;font-size:10.67px;line-height:10.67px;color:#000;letter-spacing:0.000px;">1958</div>
<div class="t" style="left:138.14px;top:449.00px;font-size:10.67px;line-height:10.67px;color:#000;letter-spacing:0.000px;">4,924,385.0</div>
<div class="t" style="left:220.14px;top:449.00px;font-size:10.67px;line-height:10.67px;color:#000;letter-spacing:0.000px;">4,586,034.0</div>
<div class="t" style="left:302.14px;top:449.00px;font-size:10.67px;line-height:10.67px;color:#000;letter-spacing:0.000px;">1,078,927.0</div>
<div class="t" style="left:394.04px;top:449.00px;font-size:10.67px;line-height:10.67px;color:#000;letter-spacing:0.000px;">334,543.0</div>
<div class="t" style="left:489.04px;top:449.00px;font-size:10.67px;line-height:10.67px;color:#000;letter-spacing:0.000px;">744,384.0</div>
<div class="t" style="left:556.14px;top:449.00px;font-size:10.67px;line-height:10.67px;color:#000;letter-spacing:0.000px;">3,507,107.0</div>
<div class="t" style="left:634.04px;top:449.00px;font-size:10.67px;line-height:10.67px;color:#000;letter-spacing:0.000px;">338,351.0</div>
<div class="t" style="left:25.00px;top:469.00px;font-size:10.67px;line-height:10.67px;color:#000;letter-spacing:0.000px;">1959</div>
<div class="t" style="left:138.14px;top:469.00px;font-size:10.67px;line-height:10.67px;color:#000;letter-spacing:0.000px;">7,157,665.0</div>
<div class="t" style="left:220.14px;top:469.00px;font-size:10.67px;line-height:10.67px;color:#000;letter-spacing:0.000px;">6,720,765.0</div>
<div class="t" style="left:302.14px;top:469.00px;font-size:10.67px;line-height:10.67px;color:#000;letter-spacing:0.000px;">1,347,080.0</div>
<div class="t" style="left:394.04px;top:469.00px;font-size:10.67px;line-height:10.67px;color:#000;letter-spacing:0.000px;">465,981.0</div>
<div class="t" style="left:489.04px;top:469.00px;font-size:10.67px;line-height:10.67px;color:#000;letter-spacing:0.000px;">881,099.0</div>
<div class="t" style="left:556.14px;top:469.00px;font-size:10.67px;line-height:10.67px;color:#000;letter-spacing:0.000px;">5,373,685.0</div>
<div class="t" style="left:634.04px;top:469.00px;font-size:10.67px;line-height:10.67px;color:#000;letter-spacing:0.000px;">436,900.0</div>
<div class="r" style="left:23px;top:283px;width:662px;height:1px;background:#000;"></div>
<div class="r" style="left:23px;top:323px;width:662px;height:1px;background:#000;"></div>
<div class="r" style="left:23px;top:343px;width:662px;height:1px;background:#000;"></div>
<div class="r" style="left:23px;top:363px;width:662px;height:1px;background:#000;"></div>
<div class="r" style="left:23px;top:383px;width:662px;height:1px;background:#000;"></div>
<div class="r" style="left:23px;top:403px;width:662px;height:1px;background:#000;"></div>
<div class="r" style="left:23px;top:423px;width:662px;height:1px;background:#000;"></div>
<div class="r" style="left:23px;top:443px;width:662px;height:1px;background:#000;"></div>
<div class="r" style="left:23px;top:463px;width:662px;height:1px;background:#000;"></div>
<div class="r" style="left:23px;top:483px;width:662px;height:1px;background:#000;"></div>
<div class="r" style="left:115px;top:283px;width:1px;height:204px;background:#000;"></div>
<div class="r" style="left:197px;top:283px;width:1px;height:204px;background:#000;"></div>
<div class="r" style="left:279px;top:283px;width:1px;height:204px;background:#000;"></div>
<div class="r" style="left:361px;top:283px;width:1px;height:204px;background:#000;"></div>
<div class="r" style="left:444px;top:283px;width:1px;height:204px;background:#000;"></div>
<div class="r" style="left:539px;top:283px;width:1px;height:204px;background:#000;"></div>
<div class="r" style="left:615px;top:283px;width:1px;height:204px;background:#000;"></div>
<div class="r" style="left:684px;top:283px;width:1px;height:204px;background:#000;"></div>
<div class="r" style="left:0px;top:303px;width:921px;height:1px;background:#a0a0a0;"></div>
<div class="r" style="left:22px;top:304px;width:1px;height:19px;background:#217346;"></div>
<div class="r" style="left:538px;top:302px;width:75px;height:19px;border:2px solid #217346;"></div>
<div class="r" style="left:612px;top:320px;width:7px;height:7px;background:#fff;"></div>
<div class="r" style="left:613px;top:321px;width:5px;height:5px;background:#217346;"></div>
</body></html>
